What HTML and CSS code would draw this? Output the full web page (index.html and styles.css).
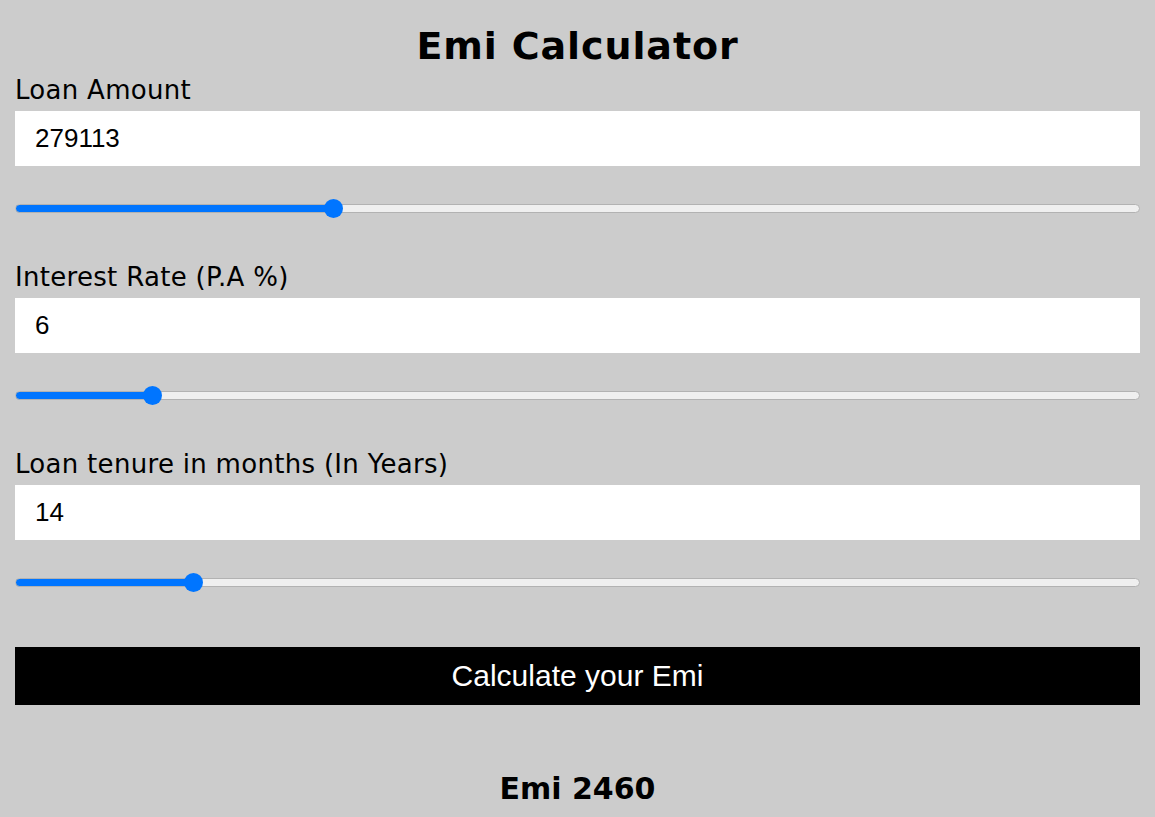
FILE: index.html
```html
<!DOCTYPE html>
<html lang="en">
<head>
    <meta charset="UTF-8">
    <meta name="viewport" content="width=device-width, initial-scale=1.0">
    <title>Emi Calculator</title>
    <link rel="stylesheet" href="styles.css">
</head>
<body>
    <div class="calc">
        <h1>Emi Calculator</h1>
        <div class="field">
            <label for="amount">Loan Amount</label>
            <input type="text" id="amount" class="num" value="279113">
            <input type="range" class="slider" min="0" max="1000000" value="279113" style="--f: 0.2809">
        </div>
        <div class="field">
            <label for="rate">Interest Rate (P.A %)</label>
            <input type="text" id="rate" class="num" value="6">
            <input type="range" class="slider" min="0" max="52" value="6" style="--f: 0.1162">
        </div>
        <div class="field">
            <label for="tenure">Loan tenure in months (In Years)</label>
            <input type="text" id="tenure" class="num" value="14">
            <input type="range" class="slider" min="0" max="92" value="14" style="--f: 0.1533">
        </div>
        <button type="button" class="calc-btn">Calculate your Emi</button>
        <h2 class="result">Emi 2460</h2>
    </div>
</body>
</html>
```

FILE: styles.css
```css
body { margin: 0; background: #cccccc; font-family: "DejaVu Sans", Verdana, sans-serif; color: #000; }
.calc { padding: 24px 15px 0; }
h1 { margin: 0; font-size: 38px; line-height: 44px; letter-spacing: 0.9px; text-align: center; }
.field { margin-top: 8px; }
.field + .field { margin-top: 45px; }
.field label { display: block; font-size: 26px; line-height: 28px; letter-spacing: 0.3px; }
.num { display: block; box-sizing: border-box; width: 100%; height: 55px; margin-top: 7px; padding: 0 20px; border: none; outline: none; background: #fff; font-family: "Liberation Sans", Arial, sans-serif; font-size: 26px; color: #000; }
.slider { display: block; -webkit-appearance: none; appearance: none; width: 100%; height: 19px; margin: 33px 0 0; background: transparent; }
.slider::-webkit-slider-runnable-track { box-sizing: border-box; height: 9px; border: 1px solid #b2b2b2; border-radius: 5px; background: linear-gradient(#0075ff, #0075ff) no-repeat, #efefef; background-size: calc(9.5px + var(--f) * (100% - 19px)) 100%; background-origin: border-box; background-clip: border-box; }
.slider::-webkit-slider-thumb { -webkit-appearance: none; width: 19px; height: 19px; margin-top: -6px; border: none; border-radius: 50%; background: #0075ff; }
.calc-btn { display: block; width: 100%; height: 58px; margin-top: 55px; border: none; background: #000; color: #fff; font-family: "Liberation Sans", Arial, sans-serif; font-size: 30px; cursor: pointer; }
.result { margin: 66px 0 0; font-size: 30px; line-height: 36px; text-align: center; }
```
